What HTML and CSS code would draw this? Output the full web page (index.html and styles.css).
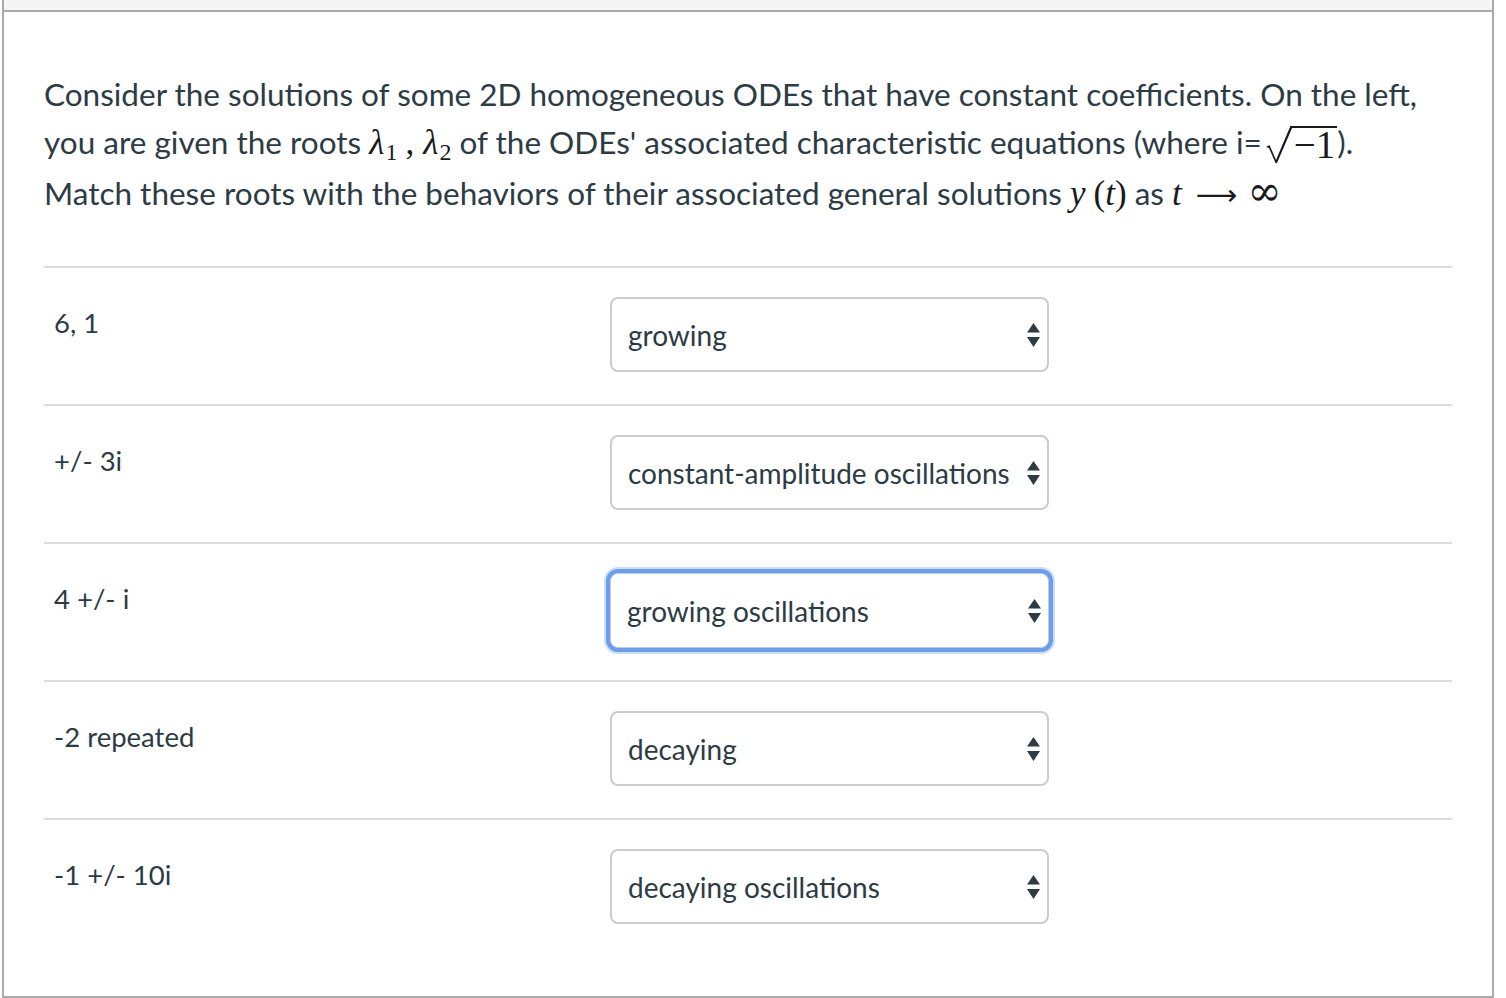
FILE: index.html
```html
<!DOCTYPE html>
<html>
<head>
<meta charset="utf-8">
<link rel="stylesheet" href="styles.css">
</head>
<body>
<div class="question">
  <div class="q-header"></div>
  <div class="q-body">
    <p class="q-text">Consider the solutions of some 2D homogeneous ODEs that have constant coefficients. On the left,<br>you are given the roots <span class="math"><i>λ</i><sub>1</sub><span class="comma">,</span><i>λ</i><sub>2</sub></span> of the ODEs' associated characteristic equations (where i=<span class="math sqrt"><svg class="rad" width="28" height="38" viewBox="0 0 28 38"><path d="M1 21 L4.5 19 L11 34 L25 1 L27.5 1 L12 37 L10.5 37 L4 22 Z" fill="#1a1a1a"/></svg><span class="radicand">−1</span></span>).<br>Match these roots with the behaviors of their associated general solutions <span class="math"><i>y</i><span class="up paren">(</span><i>t</i><span class="up">)</span></span> as <span class="math"><i>t</i><span class="arrow">⟶</span><span class="inf">∞</span></span></p>

    <div class="rows">
      <div class="row">
        <div class="label">6, 1</div>
        <div class="select"><span>growing</span><svg class="arrows" width="13" height="24" viewBox="0 0 13 24"><path d="M6.5 0 L13 9.5 L0 9.5 Z M0 14 L13 14 L6.5 24 Z" fill="#2d3b45"/></svg></div>
      </div>
      <div class="row">
        <div class="label">+/- 3i</div>
        <div class="select"><span>constant-amplitude oscillations</span><svg class="arrows" width="13" height="24" viewBox="0 0 13 24"><path d="M6.5 0 L13 9.5 L0 9.5 Z M0 14 L13 14 L6.5 24 Z" fill="#2d3b45"/></svg></div>
      </div>
      <div class="row">
        <div class="label">4 +/- i</div>
        <div class="select focused"><span>growing oscillations</span><svg class="arrows" width="13" height="24" viewBox="0 0 13 24"><path d="M6.5 0 L13 9.5 L0 9.5 Z M0 14 L13 14 L6.5 24 Z" fill="#2d3b45"/></svg></div>
      </div>
      <div class="row">
        <div class="label">-2 repeated</div>
        <div class="select"><span>decaying</span><svg class="arrows" width="13" height="24" viewBox="0 0 13 24"><path d="M6.5 0 L13 9.5 L0 9.5 Z M0 14 L13 14 L6.5 24 Z" fill="#2d3b45"/></svg></div>
      </div>
      <div class="row">
        <div class="label">-1 +/- 10i</div>
        <div class="select"><span>decaying oscillations</span><svg class="arrows" width="13" height="24" viewBox="0 0 13 24"><path d="M6.5 0 L13 9.5 L0 9.5 Z M0 14 L13 14 L6.5 24 Z" fill="#2d3b45"/></svg></div>
      </div>
    </div>
  </div>
</div>
</body>
</html>
```
FILE: styles.css
```css
html, body {
  margin: 0;
  padding: 0;
  background: #ffffff;
}
body {
  font-family: Lato, "Open Sans", sans-serif;
  color: #2d3b45;
}
.question {
  margin-left: 2px;
  width: 1492px;
  height: 998px;
  box-sizing: border-box;
  border-left: 2px solid #a9a9a9;
  border-right: 2px solid #a9a9a9;
  border-bottom: 2px solid #a9a9a9;
}
.q-header {
  height: 10px;
  background: #f5f5f5;
  border-bottom: 2px solid #a9a9a9;
}
.q-body {
  padding: 0 40px 0 40px;
}
.q-text {
  margin: 0;
  padding-top: 58px;
  font-size: 31.5px;
  line-height: 48px;
  padding-bottom: 47px;
}
.math {
  font-family: "Liberation Serif", "DejaVu Serif", serif;
  font-size: 35px;
  white-space: nowrap;
  color: #1a1a1a;
}
.math i {
  font-style: italic;
}
.math sub {
  font-size: 24px;
  vertical-align: -6px;
  line-height: 0;
  font-style: normal;
  margin-left: 1px;
}
.math .comma {
  margin: 0 9px 0 8px;
}
.math .up {
  font-style: normal;
}
.math .paren {
  margin-left: 8px;
}
.math .arrow {
  font-family: "DejaVu Sans", sans-serif;
  font-size: 29px;
  margin: 0 10px 0 14px;
}
.math .inf {
  font-family: "DejaVu Serif", serif;
  font-size: 41px;
}
.sqrt {
  display: inline-flex;
  align-items: flex-start;
  vertical-align: -10px;
  line-height: 1;
  margin-left: 3px;
}
.sqrt .rad {
  display: block;
  margin-right: -3px;
}
.sqrt .radicand {
  border-top: 2px solid #1a1a1a;
  padding: 0 2px 0 4px;
  font-size: 39px;
  line-height: 34px;
  display: block;
}
.rows {
  border-top: 2px solid #dddddd;
}
.row {
  display: flex;
  align-items: flex-start;
  height: 138px;
  box-sizing: border-box;
}
.row + .row {
  border-top: 2px solid #dddddd;
}
.row:first-child {
  height: 136px;
}
.label {
  width: 566px;
  padding: 37px 0 0 10px;
  box-sizing: border-box;
  font-size: 27.5px;
  line-height: 36px;
}
.select {
  margin-top: 29px;
  width: 439px;
  height: 75px;
  box-sizing: border-box;
  border: 2px solid #cccccc;
  border-radius: 8px;
  display: flex;
  align-items: center;
  justify-content: space-between;
  padding: 0 7px 0 16px;
  font-size: 28px;
  background: #fff;
}
.select.focused {
  border: 1px solid #c4ccd8;
  box-shadow: 0 0 0 4px #6d9eec, 0 0 0 6px rgba(109,158,236,0.35);
}
.arrows {
  display: block;
}
```
